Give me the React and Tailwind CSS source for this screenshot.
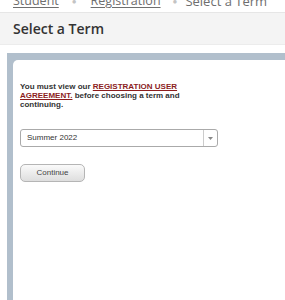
import React from "react";

function App() {
  return (
    <div className="w-[285px] h-[300px] overflow-hidden bg-white" style={{ fontFamily: "'Open Sans', sans-serif" }}>
      {/* breadcrumb, scrolled partly off the top */}
      <div className="h-[13px] overflow-hidden border-b border-[#e6e6e6] bg-white">
        <div className="flex items-center pl-[13px] -mt-[9px] text-[12.5px] leading-[20px] text-[#6e6e6e] whitespace-nowrap">
          <span className="underline decoration-1 underline-offset-2">Student</span>
          <span className="ml-[13px] mr-[14px] text-[#c4c4c4] text-[8px]">●</span>
          <span className="underline decoration-1 underline-offset-2">Registration</span>
          <span className="ml-[12px] mr-[8px] text-[#c4c4c4] text-[8px]">●</span>
          <span className="text-[13px]">Select a Term</span>
        </div>
      </div>

      <div className="h-[32px] bg-[#f4f4f4] flex items-center pl-[13px] border-b border-[#ececec]">
        <h1 className="text-[14px] font-semibold text-[#333]">Select a Term</h1>
      </div>

      <div className="mt-[8px] ml-[7px] h-[300px] bg-[#b1bfcc] pt-[7px] pl-[6px]">
        <div className="h-full bg-white rounded-tl-[5px] pt-[22px] pl-[7px]" style={{ fontFamily: "'Liberation Sans', Arial, sans-serif" }}>
          <p className="w-[190px] text-[8px] leading-[9px] font-bold text-[#333]">
            You must view our{" "}
            <a href="#" className="text-[#8c1d1d] underline">REGISTRATION USER AGREEMENT.</a>{" "}
            before choosing a term and continuing.
          </p>

          <div className="mt-[20px] w-[198px] h-[18px] flex items-center rounded-[3px] border border-[#aaa] bg-white">
            <span className="flex-1 pl-[6px] text-[8px] text-[#333]">Summer 2022</span>
            <span className="w-[14px] h-full border-l border-[#ccc] flex items-center justify-center">
              <svg width="5" height="3" viewBox="0 0 5 3"><path d="M0 0h5L2.5 3z" fill="#888" /></svg>
            </span>
          </div>

          <button className="mt-[17px] w-[65px] h-[18px] rounded-[5px] border border-[#b5b5b5] bg-gradient-to-b from-[#fafafa] to-[#dedede] text-[8px] text-[#444]">
            Continue
          </button>
        </div>
      </div>
    </div>
  );
}

export default App;
